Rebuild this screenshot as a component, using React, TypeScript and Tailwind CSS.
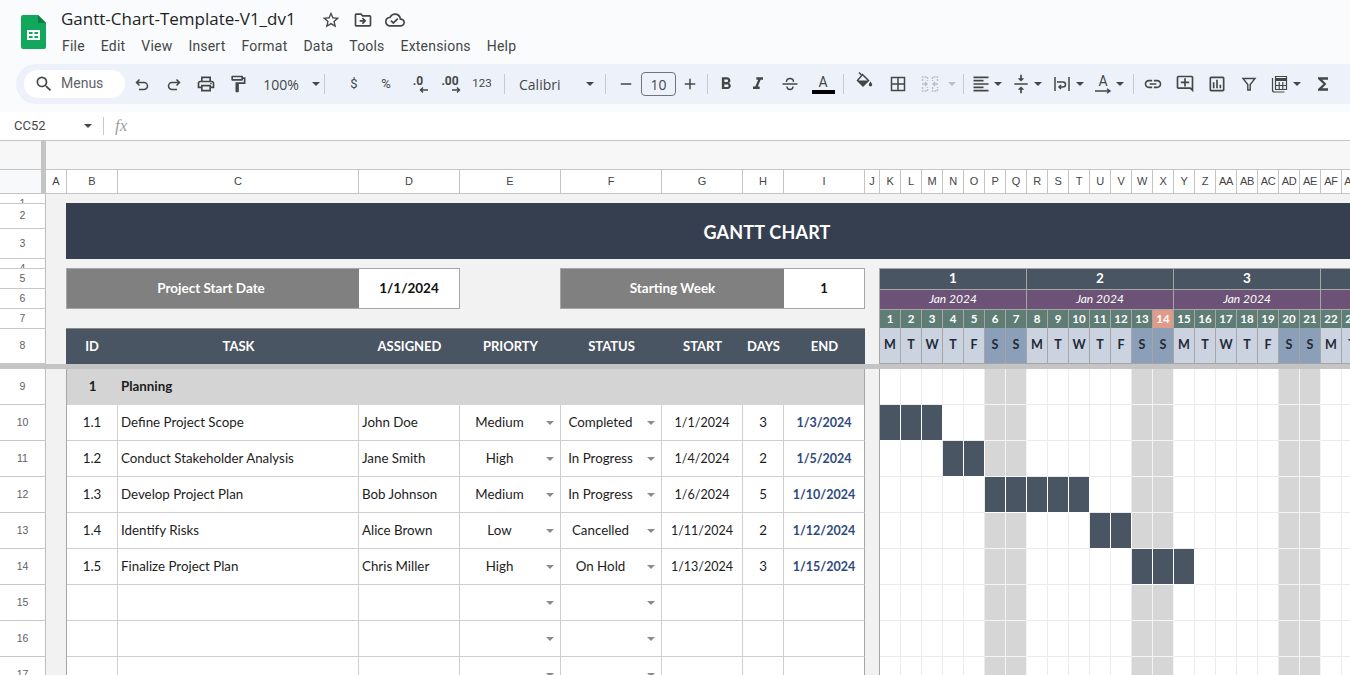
import type { ReactNode } from "react";
import {
  MdAdd,
  MdFormatAlignLeft,
  MdFormatBold,
  MdFormatItalic,
  MdFunctions,
  MdLink,
  MdOutlineAddComment,
  MdOutlineCloudDone,
  MdOutlineDriveFileMove,
  MdOutlineFormatPaint,
  MdOutlineInsertChart,
  MdOutlinePrint,
  MdRemove,
  MdSearch,
  MdStarBorder,
  MdVerticalAlignCenter,
} from "react-icons/md";

const COLS =
  "grid grid-cols-[46px_21px_51px_241px_101px_101px_101px_81px_41px_81px_15px_1fr]";
const CALIBRI = "font-['Lato','Noto_Sans',sans-serif]";
const ARIAL = "font-['Liberation_Sans',Arial,sans-serif]";

const COLUMN_LETTERS = ["K", "L", "M", "N", "O", "P", "Q", "R", "S", "T", "U", "V", "W", "X", "Y", "Z", "AA", "AB", "AC", "AD", "AE", "AF", "AG"];
const WEEKDAYS = ["M", "T", "W", "T", "F", "S", "S"];
const DAYS = Array.from({ length: 23 }, (_, i) => i);

const TASKS = [
  { row: 10, id: "1.1", task: "Define Project Scope", who: "John Doe", priority: "Medium", status: "Completed", start: "1/1/2024", days: "3", end: "1/3/2024", from: 0 },
  { row: 11, id: "1.2", task: "Conduct Stakeholder Analysis", who: "Jane Smith", priority: "High", status: "In Progress", start: "1/4/2024", days: "2", end: "1/5/2024", from: 3 },
  { row: 12, id: "1.3", task: "Develop Project Plan", who: "Bob Johnson", priority: "Medium", status: "In Progress", start: "1/6/2024", days: "5", end: "1/10/2024", from: 5 },
  { row: 13, id: "1.4", task: "Identify Risks", who: "Alice Brown", priority: "Low", status: "Cancelled", start: "1/11/2024", days: "2", end: "1/12/2024", from: 10 },
  { row: 14, id: "1.5", task: "Finalize Project Plan", who: "Chris Miller", priority: "High", status: "On Hold", start: "1/13/2024", days: "3", end: "1/15/2024", from: 12 },
  { row: 15 },
  { row: 16 },
  { row: 17 },
];

function Caret({ className = "border-t-[#444746]" }: { className?: string }) {
  return <span className={`inline-block h-0 w-0 shrink-0 border-x-[4px] border-t-[4px] border-x-transparent ${className}`} />;
}

function Btn({ children, className = "w-8" }: { children: ReactNode; className?: string }) {
  return <div className={`flex h-8 shrink-0 items-center justify-center text-[#444746] ${className}`}>{children}</div>;
}

function Sep({ className = "" }: { className?: string }) {
  return <div className={`h-5 w-px shrink-0 bg-[#c7c9cc] ${className}`} />;
}

function SheetsLogo() {
  return (
    <svg width="25" height="34" viewBox="0 0 25 34" className="shrink-0">
      <path d="M2 0h15l8 8v24a2 2 0 0 1-2 2H2a2 2 0 0 1-2-2V2a2 2 0 0 1 2-2z" fill="#11a85d" />
      <path d="M17 0l8 8h-8z" fill="#0b7f43" />
      <path d="M6 15h13v10H6z" fill="#fff" />
      <path d="M8 17h3.6v2.1H8zM13.4 17H17v2.1h-3.6zM8 20.9h3.6V23H8zM13.4 20.9H17V23h-3.6z" fill="#11a85d" />
    </svg>
  );
}

function TopBar() {
  return (
    <div className="flex h-[64px] bg-[#f9fbfd] pl-[21px] pt-[15px]">
      <SheetsLogo />
      <div className="ml-[15px] -mt-[9px]">
        <div className="flex h-[26px] items-center">
          <span className="font-['Open_Sans',sans-serif] text-[17px] text-[#1f1f1f]">Gantt-Chart-Template-V1_dv1</span>
          <div className="ml-[25px] mt-[2px] flex items-center gap-[12px] text-[#444746]">
            <MdStarBorder size={20} />
            <MdOutlineDriveFileMove size={20} />
            <MdOutlineCloudDone size={20} />
          </div>
        </div>
        <div className="ml-px mt-[4px] flex gap-[16px] font-['Roboto',sans-serif] text-[14px] leading-[20px] tracking-[0.2px] text-[#444746]">
          {["File", "Edit", "View", "Insert", "Format", "Data", "Tools", "Extensions", "Help"].map((item) => (
            <span key={item}>{item}</span>
          ))}
        </div>
      </div>
    </div>
  );
}

function DecimalIcon({ label, left }: { label: string; left?: boolean }) {
  return (
    <div className="flex flex-col items-center font-['Roboto',sans-serif] text-[12px] font-bold leading-[12px] text-[#444746]">
      <span>{label}</span>
      <svg width="9" height="6" viewBox="0 0 9 6" fill="none" stroke="#444746" strokeWidth="1.4" className={left ? "ml-[10px]" : "ml-[12px]"}>
        <path d={left ? "M9 3H1.5M4 .6 1.5 3 4 5.4" : "M0 3h7.5M5 .6 7.5 3 5 5.4"} />
      </svg>
    </div>
  );
}

function UndoIcon({ flip }: { flip?: boolean }) {
  return (
    <svg width="18" height="18" viewBox="0 0 18 18" fill="none" stroke="#444746" strokeWidth="1.5" className={flip ? "-scale-x-100" : ""}>
      <path d="M3.5 7.5H11a3.5 3.5 0 0 1 0 7H6M6.5 4.5l-3 3 3 3" />
    </svg>
  );
}

function StrikeIcon() {
  return (
    <svg width="18" height="18" viewBox="0 0 18 18" fill="none" stroke="#444746" strokeWidth="1.4">
      <path d="M1.5 9h15M5.5 7c0-2 1.6-3.5 3.5-3.5S12.500 5 12.500 7M6 11.500c0 1.800 1.300 3 3 3s3-1.200 3-3" />
    </svg>
  );
}

function FillIcon() {
  return (
    <svg width="20" height="20" viewBox="0 0 20 20" className="-mt-[7px]">
      <path d="M5 1.500l2.500 2.500" stroke="#444746" strokeWidth="1.5" />
      <path d="M8.500 3.500L14.500 9.500 9 15 3.500 9.500z" fill="none" stroke="#444746" strokeWidth="1.500" />
      <path d="M3.500 9.500h11L9 15z" fill="#444746" />
      <path d="M16.500 10.500s-1.700 2-1.700 3.200a1.700 1.700 0 0 0 3.400 0c0-1.200-1.700-3.200-1.700-3.200z" fill="#444746" />
    </svg>
  );
}

function BordersIcon() {
  return (
    <svg width="18" height="18" viewBox="0 0 18 18" fill="none" stroke="#444746" strokeWidth="1.5">
      <path d="M2.500 2.500h13v13h-13zM9 2.500v13M2.500 9h13" />
    </svg>
  );
}

function MergeIcon() {
  return (
    <svg width="18" height="18" viewBox="0 0 18 18" fill="none" stroke="#b9bec4" strokeWidth="1.4">
      <path d="M1.500 6V2h5v4M1.500 12v4h5v-4M16.500 6V2h-5v4M11.500 12v4h5v-4" strokeDasharray="2 1" />
      <path d="M1 9h5m-2-2l2 2-2 2M17 9h-5m2-2l-2 2 2 2" />
    </svg>
  );
}

function WrapIcon() {
  return (
    <svg width="18" height="18" viewBox="0 0 18 18" fill="none" stroke="#444746" strokeWidth="1.5">
      <path d="M2 2v14M16 2v14M4 7h6a2.500 2.500 0 0 1 0 5H6m2-2l-2 2 2 2" />
    </svg>
  );
}

function RotateIcon() {
  return (
    <div className="flex w-[18px] flex-col items-center text-[#444746]">
      <span className="font-['Roboto',sans-serif] text-[14px] leading-[13px]">A</span>
      <svg width="18" height="6" viewBox="0 0 18 6" fill="none" stroke="#444746" strokeWidth="1.4">
        <path d="M1 3h15m-3-2.200L16 3l-3 2.200" />
      </svg>
    </div>
  );
}

function FilterIcon() {
  return (
    <svg width="18" height="18" viewBox="0 0 18 18" fill="none" stroke="#444746" strokeWidth="1.4">
      <path d="M3 3.500h12L10.200 9.500V15H7.800V9.500z" />
    </svg>
  );
}

function FunctionsIcon() {
  return (
    <svg width="20" height="20" viewBox="0 0 20 20" fill="none" stroke="#444746" strokeWidth="1.2">
      <path d="M3.500 4v12a2 2 0 0 0 2 2h10" />
      <path d="M6.500 2.500h11v13h-11z" />
      <path d="M6.500 5.500h11" strokeWidth="3" />
      <path d="M10.200 8v7.500M13.800 8v7.500M6.500 11.500h11" />
    </svg>
  );
}

function Toolbar() {
  return (
    <div className="h-[48px] bg-[#f9fbfd]">
      <div className="ml-[16px] flex h-[40px] items-center rounded-l-[20px] bg-[#edf2fa] pl-[8px]">
        <div className="flex h-[28px] w-[101px] shrink-0 items-center rounded-full bg-white pl-[10px] font-['Roboto',sans-serif] text-[14px] text-[#5f6368]">
          <MdSearch size={20} className="text-[#444746]" />
          <span className="mb-[2px] ml-[7px]">Menus</span>
        </div>
        <div className="w-px shrink-0" />
        <Btn><UndoIcon /></Btn>
        <Btn><UndoIcon flip /></Btn>
        <Btn><MdOutlinePrint size={20} /></Btn>
        <Btn><MdOutlineFormatPaint size={20} /></Btn>
        <Btn className="w-[70px] gap-[13px] pl-[5px] font-['Open_Sans',sans-serif] text-[14px]">
          <span>100%</span>
          <Caret />
        </Btn>
        <Sep />
        <Btn className="ml-[13px] w-8 font-['Roboto',sans-serif] text-[13px]">$</Btn>
        <Btn className="w-8 font-['Roboto',sans-serif] text-[13px]">%</Btn>
        <Btn><DecimalIcon label=".0" left /></Btn>
        <Btn><DecimalIcon label=".00" /></Btn>
        <Btn className="w-8 font-['Roboto',sans-serif] text-[11.5px]">123</Btn>
        <Sep className="ml-[6px]" />
        <Btn className="ml-[14px] w-[75px] font-['Open_Sans',sans-serif] text-[14px]">
          <span className="w-[67px]">Calibri</span>
          <Caret />
        </Btn>
        <Sep className="ml-[11px]" />
        <Btn className="ml-[4px] w-8"><MdRemove size={18} /></Btn>
        <div className="-ml-px flex h-[24px] w-[35px] shrink-0 items-center justify-center rounded-[4px] border border-[#6f7478] font-['Open_Sans',sans-serif] text-[14px] text-[#444746]">10</div>
        <Btn className="w-[28px]"><MdAdd size={18} /></Btn>
        <Sep className="ml-[3px]" />
        <Btn className="ml-[2px] w-8"><MdFormatBold size={20} /></Btn>
        <Btn><MdFormatItalic size={20} /></Btn>
        <Btn><StrikeIcon /></Btn>
        <Btn className="ml-px w-8 flex-col">
          <span className="font-['Roboto',sans-serif] text-[14px] leading-[14px]">A</span>
          <span className="mt-[1px] h-[4px] w-[23px] bg-black" />
        </Btn>
        <Sep className="ml-[4px]" />
        <Btn className="ml-[4px] w-8"><FillIcon /></Btn>
        <Btn className="ml-[2px] w-8"><BordersIcon /></Btn>
        <Btn className="w-[42px] gap-[9px] pl-[7px]">
          <MergeIcon />
          <Caret className="border-t-[#b9bec4]" />
        </Btn>
        <Sep className="ml-[7px]" />
        <Btn className="ml-[7px] w-[31px] gap-[3px]"><MdFormatAlignLeft size={20} /><Caret /></Btn>
        <Btn className="ml-[9px] w-[31px] gap-[3px]"><MdVerticalAlignCenter size={20} /><Caret /></Btn>
        <Btn className="ml-[11px] w-[31px] gap-[5px]"><WrapIcon /><Caret /></Btn>
        <Btn className="ml-[10px] w-[30px] gap-[4px]"><RotateIcon /><Caret /></Btn>
        <Sep className="ml-[9px]" />
        <Btn className="ml-[3px] w-8"><MdLink size={20} /></Btn>
        <Btn><MdOutlineAddComment size={20} /></Btn>
        <Btn><MdOutlineInsertChart size={20} /></Btn>
        <Btn><FilterIcon /></Btn>
        <Btn className="ml-[4px] w-8 gap-[4px]"><FunctionsIcon /><Caret /></Btn>
        <Btn className="ml-[6px] w-8"><MdFunctions size={20} /></Btn>
      </div>
    </div>
  );
}

function FormulaBar() {
  return (
    <div className="flex h-[28px] items-center bg-white pl-[14px] text-[#444746]">
      <span className="w-[70px] font-['Roboto',sans-serif] text-[13px]">CC52</span>
      <Caret />
      <div className="ml-[11px] h-[18px] w-px bg-[#c7c9cc]" />
      <span className="ml-[11px] font-['Liberation_Serif',serif] text-[17px] italic text-[#9aa0a6]">fx</span>
    </div>
  );
}

function RowNum({ n, className = "items-center" }: { n: number; className?: string }) {
  return (
    <div className={`flex justify-center overflow-hidden border-r border-b border-r-[#bdbdbd] border-b-[#c8c8c8] bg-white ${ARIAL} text-[10.5px] font-normal text-[#5f5f5f] ${className}`}>
      {n}
    </div>
  );
}

function ColHead({ label }: { label: string }) {
  return (
    <div className={`flex items-center justify-center border-r border-b border-[#c4c4c4] bg-white ${ARIAL} text-[11px] text-[#444]`}>
      {label}
    </div>
  );
}

function ColumnHeaders() {
  return (
    <div className={`${COLS} h-[24px]`}>
      <div className="flex border-b border-[#c4c4c4] bg-[#f8f9fa]">
        <div className="w-[41px]" />
        <div className="w-[5px] bg-[#c4c4c4]" />
      </div>
      {["A", "B", "C", "D", "E", "F", "G", "H", "I", "J"].map((label) => (
        <ColHead key={label} label={label} />
      ))}
      <div className="flex overflow-hidden">
        {COLUMN_LETTERS.map((label) => (
          <div key={label} className={`flex w-[21px] shrink-0 items-center justify-center border-r border-b border-[#c4c4c4] bg-white ${ARIAL} text-[11px] tracking-[-0.3px] text-[#444]`}>
            {label}
          </div>
        ))}
      </div>
    </div>
  );
}

function GanttHeader() {
  return (
    <div className={`col-start-12 row-span-4 row-start-5 -ml-px -mt-px flex flex-col overflow-hidden border-l border-[#a6a6a6] ${CALIBRI}`}>
      <div className="flex h-[21px]">
        {[1, 2, 3, 4].map((week) => (
          <div key={week} className="flex w-[147px] shrink-0 items-center justify-center border-t border-r border-[#a6a6a6] bg-[#4a5563] pb-[2px] text-[13.5px] font-bold text-white">
            {week}
          </div>
        ))}
      </div>
      <div className="flex h-[20px]">
        {["Jan 2024", "Jan 2024", "Jan 2024", "Jan 2024"].map((month, i) => (
          <div key={i} className="flex w-[147px] shrink-0 items-center justify-center border-t border-r border-[#a6a6a6] bg-[#6b5276] text-[12px] italic text-white">
            {month}
          </div>
        ))}
      </div>
      <div className="flex h-[20px]">
        {DAYS.map((d) => (
          <div key={d} className={`flex w-[21px] shrink-0 items-center justify-center border-t border-r border-[#a6a6a6] text-[11.5px] font-bold text-white ${d === 13 ? "bg-[#e09a8a]" : "bg-[#5f7d75]"}`}>
            {d + 1}
          </div>
        ))}
      </div>
      <div className="flex h-[36px]">
        {DAYS.map((d) => (
          <div key={d} className={`flex w-[21px] shrink-0 items-center justify-center border-r border-b border-[#a6a6a6] text-[12.5px] font-bold text-[#1f2a37] ${d % 7 > 4 ? "bg-[#8c9fb8]" : "bg-[#cbd3e0]"}`}>
            {WEEKDAYS[d % 7]}
          </div>
        ))}
      </div>
    </div>
  );
}

function SheetTop() {
  return (
    <div className={`${COLS} grid-rows-[10px_25px_30px_10px_20px_20px_20px_35px] bg-[#f2f2f2] ${CALIBRI}`}>
      <RowNum n={1} className="col-start-1 row-start-1 items-start pt-[4px] leading-[10px]" />
      <RowNum n={2} className="col-start-1 row-start-2 items-center" />
      <RowNum n={3} className="col-start-1 row-start-3 items-center" />
      <RowNum n={4} className="col-start-1 row-start-4 items-start pt-[4px] leading-[10px]" />
      <RowNum n={5} className="col-start-1 row-start-5 items-center" />
      <RowNum n={6} className="col-start-1 row-start-6 items-center" />
      <RowNum n={7} className="col-start-1 row-start-7 items-center" />
      <RowNum n={8} className="col-start-1 row-start-8 items-center" />

      <div className="col-start-3 col-end-13 row-start-2 row-end-4 -ml-px -mt-px flex items-center justify-center bg-[#353f4f] pl-[118px] pt-[2px]">
        <span className="text-[18px] font-bold tracking-[0.2px] text-white">GANTT CHART</span>
      </div>

      <div className="col-start-3 col-end-5 row-start-5 row-end-7 -ml-px -mt-px flex items-center justify-center border border-[#a6a6a6] border-r-0 bg-[#808080] pr-[4px] text-[13.5px] font-bold text-white">
        Project Start Date
      </div>
      <div className="col-start-5 row-start-5 row-end-7 -mt-px flex items-center justify-center border-y border-r border-[#a6a6a6] bg-white text-[13.5px] font-bold text-[#111]">
        1/1/2024
      </div>
      <div className="col-start-7 col-end-10 row-start-5 row-end-7 -ml-px -mt-px flex items-center justify-center border border-[#a6a6a6] border-r-0 bg-[#808080] text-[13.5px] font-bold text-white">
        Starting Week
      </div>
      <div className="col-start-10 col-end-11 row-start-5 row-end-7 -mt-px flex items-center justify-center border-y border-r border-[#a6a6a6] bg-white text-[13px] font-bold text-[#111]">
        1
      </div>

      {[
        { label: "ID", cls: "col-start-3 -ml-px" },
        { label: "TASK", cls: "col-start-4" },
        { label: "ASSIGNED", cls: "col-start-5" },
        { label: "PRIORTY", cls: "col-start-6" },
        { label: "STATUS", cls: "col-start-7" },
        { label: "START", cls: "col-start-8" },
        { label: "DAYS", cls: "col-start-9" },
        { label: "END", cls: "col-start-10" },
      ].map(({ label, cls }) => (
        <div key={label} className={`${cls} row-start-8 -mt-px flex items-center justify-center border-t border-[#8a8a8a] bg-[#4a5563] text-[13px] font-bold text-white`}>
          {label}
        </div>
      ))}

      <GanttHeader />
    </div>
  );
}

function GanttCells({ from, length }: { from?: number; length?: number }) {
  return (
    <div className="flex overflow-hidden">
      {DAYS.map((d) => {
        const isBar = from !== undefined && length !== undefined && d >= from && d < from + length;
        const isWeekend = d % 7 > 4;
        return (
          <div
            key={d}
            className={`w-[21px] shrink-0 border-r border-b ${
              isBar ? "border-white bg-[#4a5563]" : isWeekend ? "border-[#f4f4f4] bg-[#d6d6d6]" : "border-[#ebebeb] bg-white"
            }`}
          />
        );
      })}
    </div>
  );
}

function Select({ value }: { value?: string }) {
  return (
    <div className="flex items-center border-r border-b border-[#cfcfcf] bg-white pr-[6px]">
      <span className="flex-1 whitespace-nowrap text-center">{value}</span>
      <Caret className="ml-[7px] border-t-[#8c8c8c]" />
    </div>
  );
}

function TaskRow({ t }: { t: (typeof TASKS)[number] }) {
  const cell = "flex items-center border-r border-b border-[#cfcfcf] bg-white whitespace-nowrap";
  return (
    <div className={`${COLS} h-[36px] ${CALIBRI} text-[13.33px] text-[#1d1d1d]`}>
      <RowNum n={t.row} />
      <div className="border-r border-[#a6a6a6] bg-[#f2f2f2]" />
      <div className={`${cell} justify-center`}>{t.id}</div>
      <div className={`${cell} pl-[3px]`}>{t.task}</div>
      <div className={`${cell} pl-[3px]`}>{t.who}</div>
      <Select value={t.priority} />
      <Select value={t.status} />
      <div className={`${cell} justify-center pt-[1px] text-[12.5px]`}>{t.start}</div>
      <div className={`${cell} justify-center`}>{t.days}</div>
      <div className={`${cell} justify-center border-r-[#a6a6a6] pt-[1px] text-[12.5px] font-bold text-[#2f4a7d]`}>{t.end}</div>
      <div className="border-r border-[#a6a6a6] bg-[#f2f2f2]" />
      <GanttCells from={t.from} length={t.days ? Number(t.days) : undefined} />
    </div>
  );
}

function PlanningRow() {
  return (
    <div className={`${COLS} h-[36px] ${CALIBRI} text-[13.33px] font-bold text-[#1d1d1d]`}>
      <RowNum n={9} />
      <div className="border-r border-[#a6a6a6] bg-[#f2f2f2]" />
      <div className="flex items-center justify-center bg-[#d4d4d4]">1</div>
      <div className="col-span-7 flex items-center border-r border-[#a6a6a6] bg-[#d4d4d4] pl-[3px]">Planning</div>
      <div className="border-r border-[#a6a6a6] bg-[#f2f2f2]" />
      <GanttCells />
    </div>
  );
}

export default function App() {
  return (
    <div className="h-[675px] w-[1350px] overflow-hidden bg-white">
      <TopBar />
      <Toolbar />
      <FormulaBar />
      <div className="flex h-[30px] border-y border-[#c4c4c4] bg-[#f8f7f7]">
        <div className="ml-[41px] w-[5px] bg-[#c4c4c4]" />
      </div>
      <ColumnHeaders />
      <SheetTop />
      <div className="h-[5px] bg-[#c4c4c4]" />
      <PlanningRow />
      {TASKS.map((t) => (
        <TaskRow key={t.row} t={t} />
      ))}
    </div>
  );
}
